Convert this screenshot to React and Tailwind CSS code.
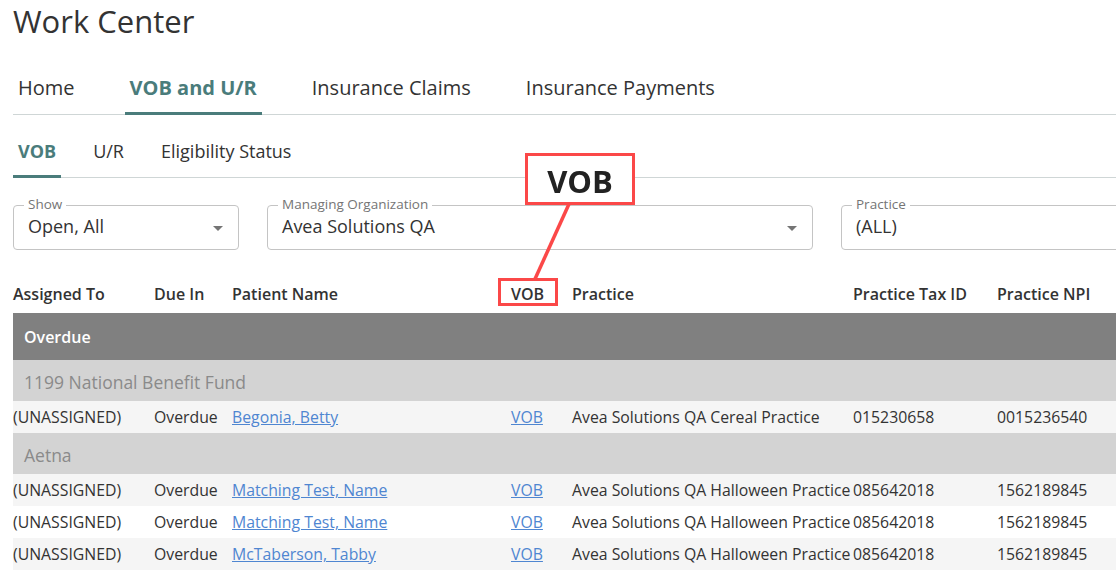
import React from "react";

const cols = "grid grid-cols-[141px_78px_279px_61px_281px_144px_200px]";

function Field({ label, value, width, arrow = true }) {
  return (
    <div className={`relative h-[45px] shrink-0 rounded-[4px] border border-[#c4c4c4] bg-white ${width}`}>
      <span className="absolute left-[10px] -top-[10px] bg-white px-[4px] text-[13.5px] leading-[16px] text-[#757575]">
        {label}
      </span>
      <div className="pl-[14px] pt-[7px] text-[18px] leading-[26px] text-[#333]">{value}</div>
      {arrow && (
        <span className="absolute right-[15px] top-[20px] h-0 w-0 border-l-[5px] border-r-[5px] border-t-[5px] border-l-transparent border-r-transparent border-t-[#757575]" />
      )}
    </div>
  );
}

function Row({ a, due, name, practice, tax, npi, shaded }) {
  return (
    <div className={`${cols} h-[32px] items-center text-[15.8px] leading-[22px] text-[#333] ${shaded ? "bg-[#f5f5f5]" : "bg-white"}`}>
      <div>{a}</div>
      <div>{due}</div>
      <div><a className="text-[#4f86d1] underline">{name}</a></div>
      <div><a className="text-[#4f86d1] underline">VOB</a></div>
      <div className="whitespace-nowrap">{practice}</div>
      <div>{tax}</div>
      <div>{npi}</div>
    </div>
  );
}

export default function App() {
  return (
    <div className="relative h-[570px] w-[1116px] overflow-hidden bg-white font-['Open_Sans',sans-serif] text-[#333]">
      <h1 className="pl-[13px] pt-[1px] text-[31px] leading-[40px] font-normal text-[#333]">Work Center</h1>

      <div className="ml-[13px] mt-[33px] flex gap-[45px] border-b border-[#cfd6d6]">
        <div className="-mb-px border-b-[3px] border-transparent px-[5px] pb-[10px] text-[20px] leading-[28px]">Home</div>
        <div className="-mb-px border-b-[3px] border-[#4a7c7b] px-[5px] pb-[10px] text-[20px] leading-[28px] font-bold text-[#4a7c7b]">VOB and U/R</div>
        <div className="-mb-px border-b-[3px] border-transparent px-[5px] pb-[10px] text-[20px] leading-[28px]">Insurance Claims</div>
        <div className="-mb-px border-b-[3px] border-transparent px-[5px] pb-[10px] text-[20px] leading-[28px]">Insurance Payments</div>
      </div>

      <div className="ml-[13px] mt-[23px] flex gap-[27px] border-b border-[#cfd6d6]">
        <div className="-mb-px border-b-[3px] border-[#4a7c7b] px-[5px] pb-[11px] text-[18px] leading-[26px] font-bold text-[#4a7c7b]">VOB</div>
        <div className="-mb-px border-b-[3px] border-transparent px-[5px] pb-[11px] text-[18px] leading-[26px]">U/R</div>
        <div className="-mb-px border-b-[3px] border-transparent px-[5px] pb-[11px] text-[18px] leading-[26px]">Eligibility Status</div>
      </div>

      <div className="ml-[13px] mt-[27px] flex gap-[28px]">
        <Field label="Show" value="Open, All" width="w-[226px]" />
        <Field label="Managing Organization" value="Avea Solutions QA" width="w-[546px]" />
        <Field label="Practice" value="(ALL)" width="w-[320px]" arrow={false} />
      </div>

      <div className="ml-[13px] w-[1200px]">
        <div className={`${cols} pt-[33px] pb-[8px] text-[16px] leading-[22px] font-semibold text-[#333]`}>
          <div>Assigned To</div>
          <div>Due In</div>
          <div>Patient Name</div>
          <div>VOB</div>
          <div>Practice</div>
          <div>Practice Tax ID</div>
          <div>Practice NPI</div>
        </div>
        <div className="flex h-[47px] items-center bg-[#808080] pl-[11px] text-[16px] font-semibold text-white">Overdue</div>
        <div className="flex h-[41px] items-center bg-[#d3d3d3] pl-[11px] pt-[4px] text-[17.5px] text-[#8a8a8a]">1199 National Benefit Fund</div>
        <Row a="(UNASSIGNED)" due="Overdue" name="Begonia, Betty" practice="Avea Solutions QA Cereal Practice" tax="015230658" npi="0015236540" shaded />
        <div className="flex h-[41px] items-center bg-[#d3d3d3] pl-[11px] pt-[4px] text-[17.5px] text-[#8a8a8a]">Aetna</div>
        <Row a="(UNASSIGNED)" due="Overdue" name="Matching Test, Name" practice="Avea Solutions QA Halloween Practice" tax="085642018" npi="1562189845" shaded />
        <Row a="(UNASSIGNED)" due="Overdue" name="Matching Test, Name" practice="Avea Solutions QA Halloween Practice" tax="085642018" npi="1562189845" />
        <Row a="(UNASSIGNED)" due="Overdue" name="McTaberson, Tabby" practice="Avea Solutions QA Halloween Practice" tax="085642018" npi="1562189845" shaded />
      </div>

      {/* annotation overlay */}
      <svg className="absolute left-0 top-0" width="1116" height="570" viewBox="0 0 1116 570">
        <line x1="569" y1="204" x2="535" y2="279" stroke="#fb4848" strokeWidth="3.5" />
      </svg>
      <div className="absolute left-[525px] top-[153px] flex h-[52px] w-[110px] items-center justify-center border-[3px] border-[#fb4848] bg-white pt-[3px] text-[31px] leading-[40px] font-bold text-[#222] blur-[0.5px]">
        VOB
      </div>
      <div className="absolute left-[498px] top-[278px] h-[28px] w-[60px] border-[3px] border-[#fb4848]" />
    </div>
  );
}
